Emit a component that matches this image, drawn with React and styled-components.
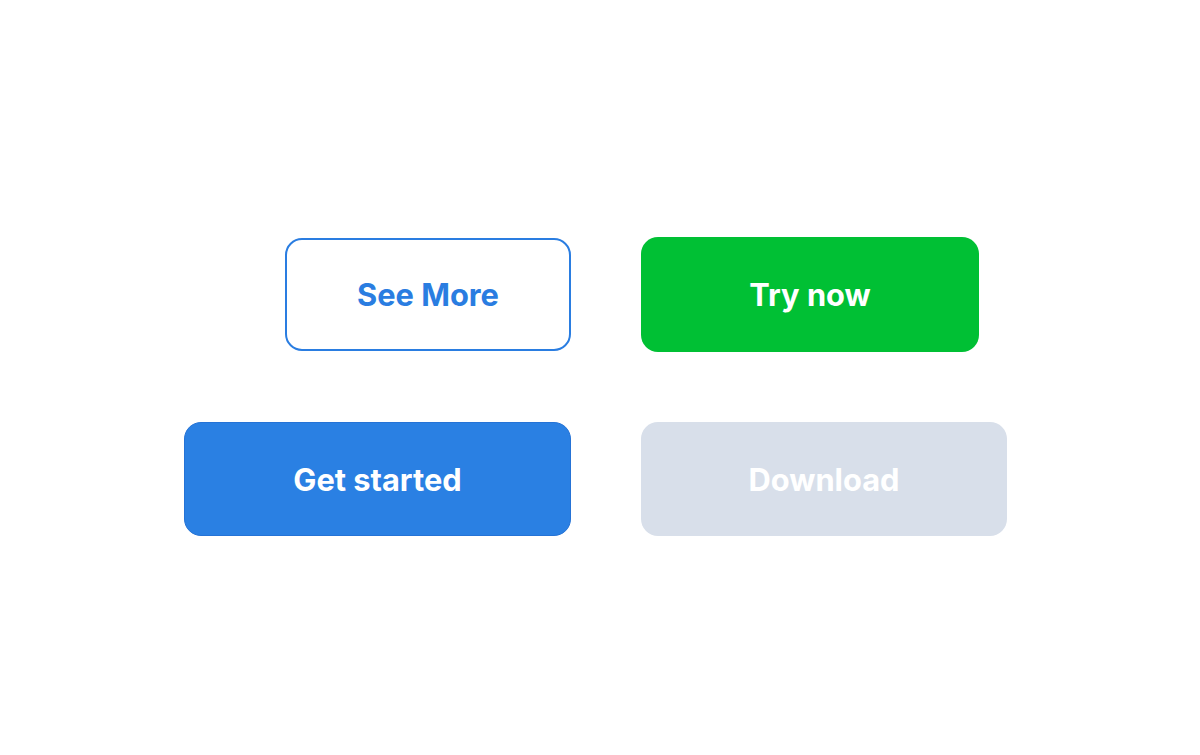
import React from 'react'
import styled, { createGlobalStyle } from 'styled-components'

const Global = createGlobalStyle`
  html, body {
    margin: 0;
    padding: 0;
    background: #ffffff;
    font-family: Inter, "Noto Sans", sans-serif;
  }
`

const Page = styled.div`
  width: 1200px;
  height: 755px;
  box-sizing: border-box;
  padding: 237px 0 0 184px;
`

const Grid = styled.div`
  display: grid;
  grid-template-columns: 387px 366px;
  column-gap: 70px;
  row-gap: 70px;
  align-items: center;
`

const variants = {
  outline: { bg: '#ffffff', border: '#2a7de1', color: '#2a7de1', bw: 2 },
  green: { bg: '#00c034', border: '#00c034', color: '#ffffff', bw: 0 },
  blue: { bg: '#2a80e3', border: '#2573d6', color: '#ffffff', bw: 1 },
  muted: { bg: '#d8dfea', border: '#d8dfea', color: '#ffffff', bw: 0 },
}

const Button = styled.button`
  justify-self: ${p => p.$align};
  width: ${p => p.$w}px;
  height: ${p => p.$h}px;
  box-sizing: border-box;
  display: flex;
  align-items: center;
  justify-content: center;
  border-radius: 17px;
  border: ${p => variants[p.$kind].bw}px solid ${p => variants[p.$kind].border};
  background: ${p => variants[p.$kind].bg};
  color: ${p => variants[p.$kind].color};
  font-family: Inter, "Noto Sans", sans-serif;
  font-size: 30.8px;
  font-weight: 700;
  padding: 0;
  cursor: pointer;
`

export default function App() {
  return (
    <>
      <Global />
      <Page>
        <Grid>
          <Button $kind="outline" $align="end" $w={286} $h={113}>See More</Button>
          <Button $kind="green" $align="start" $w={338} $h={115}>Try now</Button>
          <Button $kind="blue" $align="end" $w={387} $h={114}>Get started</Button>
          <Button $kind="muted" $align="start" $w={366} $h={114}>Download</Button>
        </Grid>
      </Page>
    </>
  )
}
